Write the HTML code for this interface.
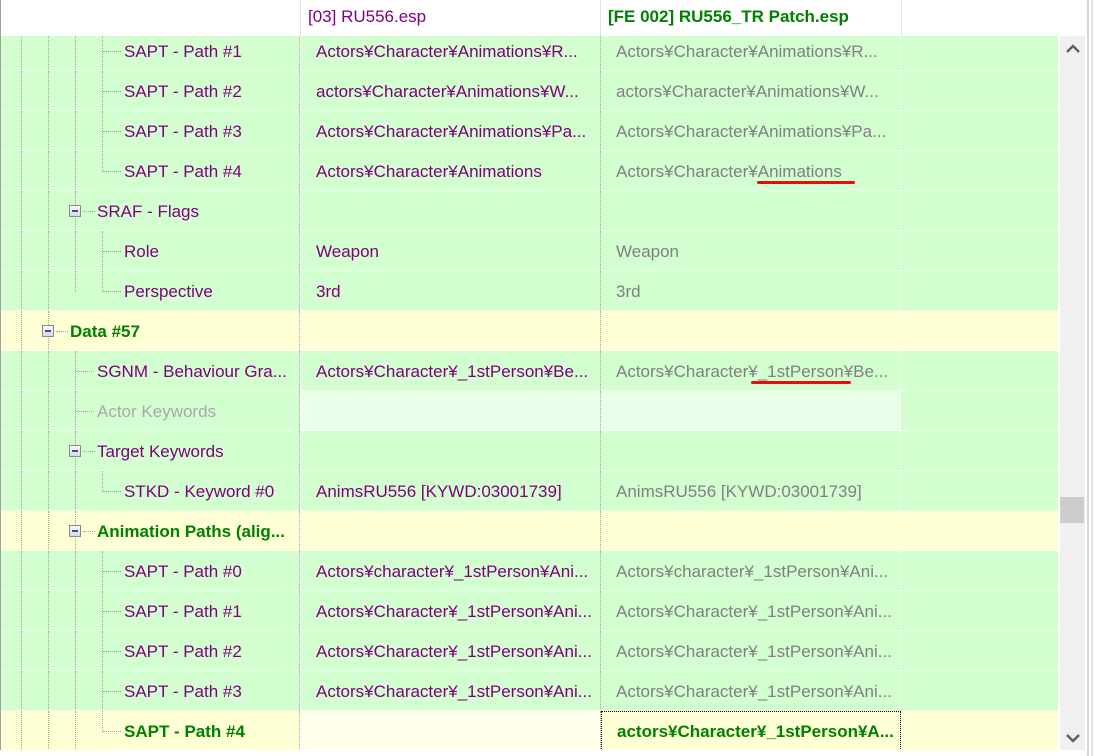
<!DOCTYPE html>
<html><head><meta charset="utf-8"><style>
*{margin:0;padding:0;box-sizing:border-box}
body{width:1095px;height:756px;overflow:hidden;background:#fff;font-family:"Segoe UI","Liberation Sans","Noto Sans CJK JP",sans-serif;font-size:17px;position:relative}
.hdr{position:absolute;top:0;left:0;width:1058px;height:36px;background:#fff;border-left:1px solid #a0a0a0}
.hdr div{position:absolute;top:0;height:36px;line-height:34px;border-right:1px solid #e3e3e3}
.row{position:absolute;left:0;width:1058px;height:40px}
.c{position:absolute;top:0;height:40px;line-height:41px;white-space:nowrap;overflow:hidden;border-bottom:1px dotted #fff}
.c1{left:1px;width:299px;border-right:1px dotted #a8a8a8}
.c2{left:301px;width:300px;padding-left:15px;color:#800080;border-right:1px dotted #a8a8a8}
.c3{left:601px;width:300px;padding-left:15px;color:#808080;border-right:1px dotted #fff}
.c4{left:901px;width:157px}
.g{background:#d2fed0}.y{background:#ffffd6}.lg{background:#e8ffe8}.ly{background:#ffffea}
.t{position:absolute;top:0;color:#800080}
.b{font-weight:bold;color:#008000}
.vl{position:absolute;top:0;height:40px;border-left:1px dotted #a0a0a0}
.hl{position:absolute;top:20px;height:0;border-top:1px dotted #a0a0a0}
.ex{position:absolute;top:14px;width:12px;height:12px;border:1px solid #8a8a8a;background:linear-gradient(#fafafa,#d8d8d8)}
.ex:after{content:"";position:absolute;left:2px;top:4px;width:6px;height:2px;background:#3050b0}
.red{position:absolute;height:3px;background:#e01010;border-radius:2px}
</style></head><body>
<div class="hdr">
<div style="left:0;width:300px"></div>
<div style="left:299px;width:301px;padding-left:8px;color:#800080">[03] RU556.esp</div>
<div style="left:600px;width:301px;padding-left:7px;color:#008000;font-weight:bold">[FE 002] RU556_TR Patch.esp</div>
<div style="left:901px;width:157px;border-right:none"></div>
</div>
<div style="position:absolute;left:0;top:36px;width:1px;height:714px;background:#a0a0a0"></div>

<div style="position:absolute;top:36px;left:0;width:1058px;height:714px;overflow:hidden">
<div style="position:relative;top:-5px">

<div class="row" style="top:0"><div class="c c1 g"><i class="vl" style="left:20px"></i><i class="vl" style="left:47px"></i><i class="vl" style="left:74px"></i><i class="vl" style="left:101px"></i><i class="hl" style="left:102px;width:18px"></i><span class="t" style="left:123px">SAPT - Path #1</span></div><div class="c c2 g">Actors¥Character¥Animations¥R...</div><div class="c c3 g">Actors¥Character¥Animations¥R...</div><div class="c c4 g"></div></div>

<div class="row" style="top:40px"><div class="c c1 g"><i class="vl" style="left:20px"></i><i class="vl" style="left:47px"></i><i class="vl" style="left:74px"></i><i class="vl" style="left:101px"></i><i class="hl" style="left:102px;width:18px"></i><span class="t" style="left:123px">SAPT - Path #2</span></div><div class="c c2 g">actors¥Character¥Animations¥W...</div><div class="c c3 g">actors¥Character¥Animations¥W...</div><div class="c c4 g"></div></div>

<div class="row" style="top:80px"><div class="c c1 g"><i class="vl" style="left:20px"></i><i class="vl" style="left:47px"></i><i class="vl" style="left:74px"></i><i class="vl" style="left:101px"></i><i class="hl" style="left:102px;width:18px"></i><span class="t" style="left:123px">SAPT - Path #3</span></div><div class="c c2 g">Actors¥Character¥Animations¥Pa...</div><div class="c c3 g">Actors¥Character¥Animations¥Pa...</div><div class="c c4 g"></div></div>

<div class="row" style="top:120px"><div class="c c1 g"><i class="vl" style="left:20px"></i><i class="vl" style="left:47px"></i><i class="vl" style="left:74px"></i><i class="vl" style="left:101px;height:21px"></i><i class="hl" style="left:102px;width:18px"></i><span class="t" style="left:123px">SAPT - Path #4</span></div><div class="c c2 g">Actors¥Character¥Animations</div><div class="c c3 g">Actors¥Character¥Animations</div><div class="c c4 g"></div></div>

<div class="row" style="top:160px"><div class="c c1 g"><i class="vl" style="left:20px"></i><i class="vl" style="left:47px"></i><i class="vl" style="left:74px"></i><i class="hl" style="left:82px;width:12px"></i><i class="ex" style="left:68px"></i><span class="t" style="left:96px">SRAF - Flags</span></div><div class="c c2 g"></div><div class="c c3 g"></div><div class="c c4 g"></div></div>

<div class="row" style="top:200px"><div class="c c1 g"><i class="vl" style="left:20px"></i><i class="vl" style="left:47px"></i><i class="vl" style="left:74px"></i><i class="vl" style="left:101px"></i><i class="hl" style="left:102px;width:18px"></i><span class="t" style="left:123px">Role</span></div><div class="c c2 g">Weapon</div><div class="c c3 g">Weapon</div><div class="c c4 g"></div></div>

<div class="row" style="top:240px"><div class="c c1 g"><i class="vl" style="left:20px"></i><i class="vl" style="left:47px"></i><i class="vl" style="left:74px;height:21px"></i><i class="vl" style="left:101px;height:21px"></i><i class="hl" style="left:102px;width:18px"></i><span class="t" style="left:123px">Perspective</span></div><div class="c c2 g">3rd</div><div class="c c3 g">3rd</div><div class="c c4 g"></div></div>

<div class="row" style="top:280px"><div class="c c1 y"><i class="vl" style="left:20px"></i><i class="vl" style="left:47px"></i><i class="hl" style="left:55px;width:12px"></i><i class="ex" style="left:41px"></i><span class="t b" style="left:69px">Data #57</span></div><div class="c c2 y"></div><div class="c c3 y"></div><div class="c c4 y"></div></div>

<div class="row" style="top:320px"><div class="c c1 g"><i class="vl" style="left:20px"></i><i class="vl" style="left:47px"></i><i class="vl" style="left:74px"></i><i class="hl" style="left:75px;width:18px"></i><span class="t" style="left:96px">SGNM - Behaviour Gra...</span></div><div class="c c2 g">Actors¥Character¥_1stPerson¥Be...</div><div class="c c3 g">Actors¥Character¥_1stPerson¥Be...</div><div class="c c4 g"></div></div>

<div class="row" style="top:360px"><div class="c c1 g"><i class="vl" style="left:20px"></i><i class="vl" style="left:47px"></i><i class="vl" style="left:74px"></i><i class="hl" style="left:75px;width:18px"></i><span class="t" style="left:96px;color:#a8a8a8">Actor Keywords</span></div><div class="c c2 lg"></div><div class="c c3 lg"></div><div class="c c4 g"></div></div>

<div class="row" style="top:400px"><div class="c c1 g"><i class="vl" style="left:20px"></i><i class="vl" style="left:47px"></i><i class="vl" style="left:74px"></i><i class="hl" style="left:82px;width:12px"></i><i class="ex" style="left:68px"></i><span class="t" style="left:96px">Target Keywords</span></div><div class="c c2 g"></div><div class="c c3 g"></div><div class="c c4 g"></div></div>

<div class="row" style="top:440px"><div class="c c1 g"><i class="vl" style="left:20px"></i><i class="vl" style="left:47px"></i><i class="vl" style="left:74px"></i><i class="vl" style="left:101px;height:21px"></i><i class="hl" style="left:102px;width:18px"></i><span class="t" style="left:123px">STKD - Keyword #0</span></div><div class="c c2 g">AnimsRU556 [KYWD:03001739]</div><div class="c c3 g">AnimsRU556 [KYWD:03001739]</div><div class="c c4 g"></div></div>

<div class="row" style="top:480px"><div class="c c1 y"><i class="vl" style="left:20px"></i><i class="vl" style="left:47px"></i><i class="vl" style="left:74px"></i><i class="hl" style="left:82px;width:12px"></i><i class="ex" style="left:68px"></i><span class="t b" style="left:96px">Animation Paths (alig...</span></div><div class="c c2 y"></div><div class="c c3 y"></div><div class="c c4 y"></div></div>

<div class="row" style="top:520px"><div class="c c1 g"><i class="vl" style="left:20px"></i><i class="vl" style="left:47px"></i><i class="vl" style="left:74px"></i><i class="vl" style="left:101px"></i><i class="hl" style="left:102px;width:18px"></i><span class="t" style="left:123px">SAPT - Path #0</span></div><div class="c c2 g">Actors¥character¥_1stPerson¥Ani...</div><div class="c c3 g">Actors¥character¥_1stPerson¥Ani...</div><div class="c c4 g"></div></div>

<div class="row" style="top:560px"><div class="c c1 g"><i class="vl" style="left:20px"></i><i class="vl" style="left:47px"></i><i class="vl" style="left:74px"></i><i class="vl" style="left:101px"></i><i class="hl" style="left:102px;width:18px"></i><span class="t" style="left:123px">SAPT - Path #1</span></div><div class="c c2 g">Actors¥Character¥_1stPerson¥Ani...</div><div class="c c3 g">Actors¥Character¥_1stPerson¥Ani...</div><div class="c c4 g"></div></div>

<div class="row" style="top:600px"><div class="c c1 g"><i class="vl" style="left:20px"></i><i class="vl" style="left:47px"></i><i class="vl" style="left:74px"></i><i class="vl" style="left:101px"></i><i class="hl" style="left:102px;width:18px"></i><span class="t" style="left:123px">SAPT - Path #2</span></div><div class="c c2 g">Actors¥Character¥_1stPerson¥Ani...</div><div class="c c3 g">Actors¥Character¥_1stPerson¥Ani...</div><div class="c c4 g"></div></div>

<div class="row" style="top:640px"><div class="c c1 g"><i class="vl" style="left:20px"></i><i class="vl" style="left:47px"></i><i class="vl" style="left:74px"></i><i class="vl" style="left:101px"></i><i class="hl" style="left:102px;width:18px"></i><span class="t" style="left:123px">SAPT - Path #3</span></div><div class="c c2 g">Actors¥Character¥_1stPerson¥Ani...</div><div class="c c3 g">Actors¥Character¥_1stPerson¥Ani...</div><div class="c c4 g"></div></div>

<div class="row" style="top:680px"><div class="c c1 y"><i class="vl" style="left:20px"></i><i class="vl" style="left:47px"></i><i class="vl" style="left:74px"></i><i class="vl" style="left:101px;height:21px"></i><i class="hl" style="left:102px;width:18px"></i><span class="t b" style="left:123px">SAPT - Path #4</span></div><div class="c c2 ly"></div><div class="c c3 y" style="border:1px dotted #000;font-weight:bold;color:#008000;line-height:39px">actors¥Character¥_1stPerson¥A...</div><div class="c c4 y"></div></div>

</div></div>

<div class="red" style="left:757px;top:181px;width:98px"></div>
<div class="red" style="left:751px;top:381px;width:100px"></div>

<div style="position:absolute;left:1060px;top:36px;width:25px;height:714px;background:#f0f0f0"></div>
<div style="position:absolute;left:1060px;top:497px;width:24px;height:26px;background:#cdcdcd"></div>
<svg style="position:absolute;left:1066px;top:44px" width="14" height="10"><path d="M1 8 L7 2 L13 8" fill="none" stroke="#606060" stroke-width="2.5"/></svg>
<svg style="position:absolute;left:1066px;top:733px" width="14" height="10"><path d="M1 2 L7 8 L13 2" fill="none" stroke="#606060" stroke-width="2.5"/></svg>
<div style="position:absolute;left:1087px;top:0;width:2px;height:756px;background:#d8d8d8"></div>
<div style="position:absolute;left:1091px;top:0;width:2px;height:756px;background:#e4e4e4"></div>
</body></html>
